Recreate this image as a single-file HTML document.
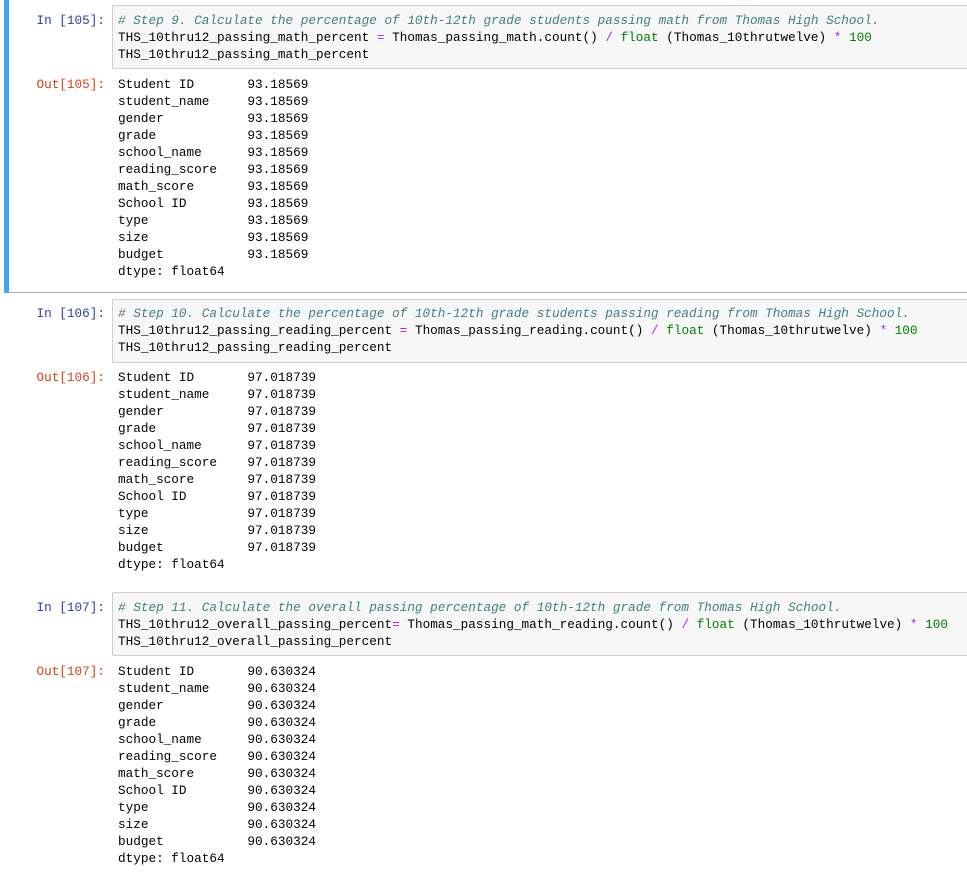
<!DOCTYPE html>
<html><head><style>
body{margin:0;width:967px;height:873px;background:#fff;position:relative;overflow:hidden;font-family:"Liberation Mono",monospace;font-size:12.7px;}
.a{position:absolute;white-space:pre;line-height:17px;}
.p{position:absolute;white-space:pre;line-height:17px;right:862px;text-align:right;}
.in{color:#303F9F}.out{color:#D84315}
.box{position:absolute;left:112px;width:870px;height:62px;background:#f7f7f7;border:1px solid #cfcfcf;border-radius:2px;}
.c{color:#408080;font-style:italic}.o{color:#AA22FF}.g{color:#008000}
</style></head><body>
<div style="position:absolute;left:4px;top:-2px;width:970px;height:293px;border:1px solid #ababab;border-left:none;"></div>
<div style="position:absolute;left:4px;top:0;width:5px;height:293px;background:#42A5F5"></div>

<div class="box" style="top:5px"></div>
<div class="p in" style="top:12px">In [105]:</div>
<div class="a" style="left:118px;top:12px"><span class="c"># Step 9. Calculate the percentage of 10th-12th grade students passing math from Thomas High School.</span>
THS_10thru12_passing_math_percent <span class="o">=</span> Thomas_passing_math.count() <span class="o">/</span> <span class="g">float</span> (Thomas_10thrutwelve) <span class="o">*</span> <span class="g">100</span>
THS_10thru12_passing_math_percent</div>
<div class="p out" style="top:76px">Out[105]:</div>
<div class="a" style="left:118px;top:76px">Student ID       93.18569
student_name     93.18569
gender           93.18569
grade            93.18569
school_name      93.18569
reading_score    93.18569
math_score       93.18569
School ID        93.18569
type             93.18569
size             93.18569
budget           93.18569
dtype: float64</div>

<div class="box" style="top:299px"></div>
<div class="p in" style="top:305px">In [106]:</div>
<div class="a" style="left:118px;top:305px"><span class="c"># Step 10. Calculate the percentage of 10th-12th grade students passing reading from Thomas High School.</span>
THS_10thru12_passing_reading_percent <span class="o">=</span> Thomas_passing_reading.count() <span class="o">/</span> <span class="g">float</span> (Thomas_10thrutwelve) <span class="o">*</span> <span class="g">100</span>
THS_10thru12_passing_reading_percent</div>
<div class="p out" style="top:369px">Out[106]:</div>
<div class="a" style="left:118px;top:369px">Student ID       97.018739
student_name     97.018739
gender           97.018739
grade            97.018739
school_name      97.018739
reading_score    97.018739
math_score       97.018739
School ID        97.018739
type             97.018739
size             97.018739
budget           97.018739
dtype: float64</div>

<div class="box" style="top:592px"></div>
<div class="p in" style="top:599px">In [107]:</div>
<div class="a" style="left:118px;top:599px"><span class="c"># Step 11. Calculate the overall passing percentage of 10th-12th grade from Thomas High School.</span>
THS_10thru12_overall_passing_percent<span class="o">=</span> Thomas_passing_math_reading.count() <span class="o">/</span> <span class="g">float</span> (Thomas_10thrutwelve) <span class="o">*</span> <span class="g">100</span>
THS_10thru12_overall_passing_percent</div>
<div class="p out" style="top:663px">Out[107]:</div>
<div class="a" style="left:118px;top:663px">Student ID       90.630324
student_name     90.630324
gender           90.630324
grade            90.630324
school_name      90.630324
reading_score    90.630324
math_score       90.630324
School ID        90.630324
type             90.630324
size             90.630324
budget           90.630324
dtype: float64</div>
</body></html>
